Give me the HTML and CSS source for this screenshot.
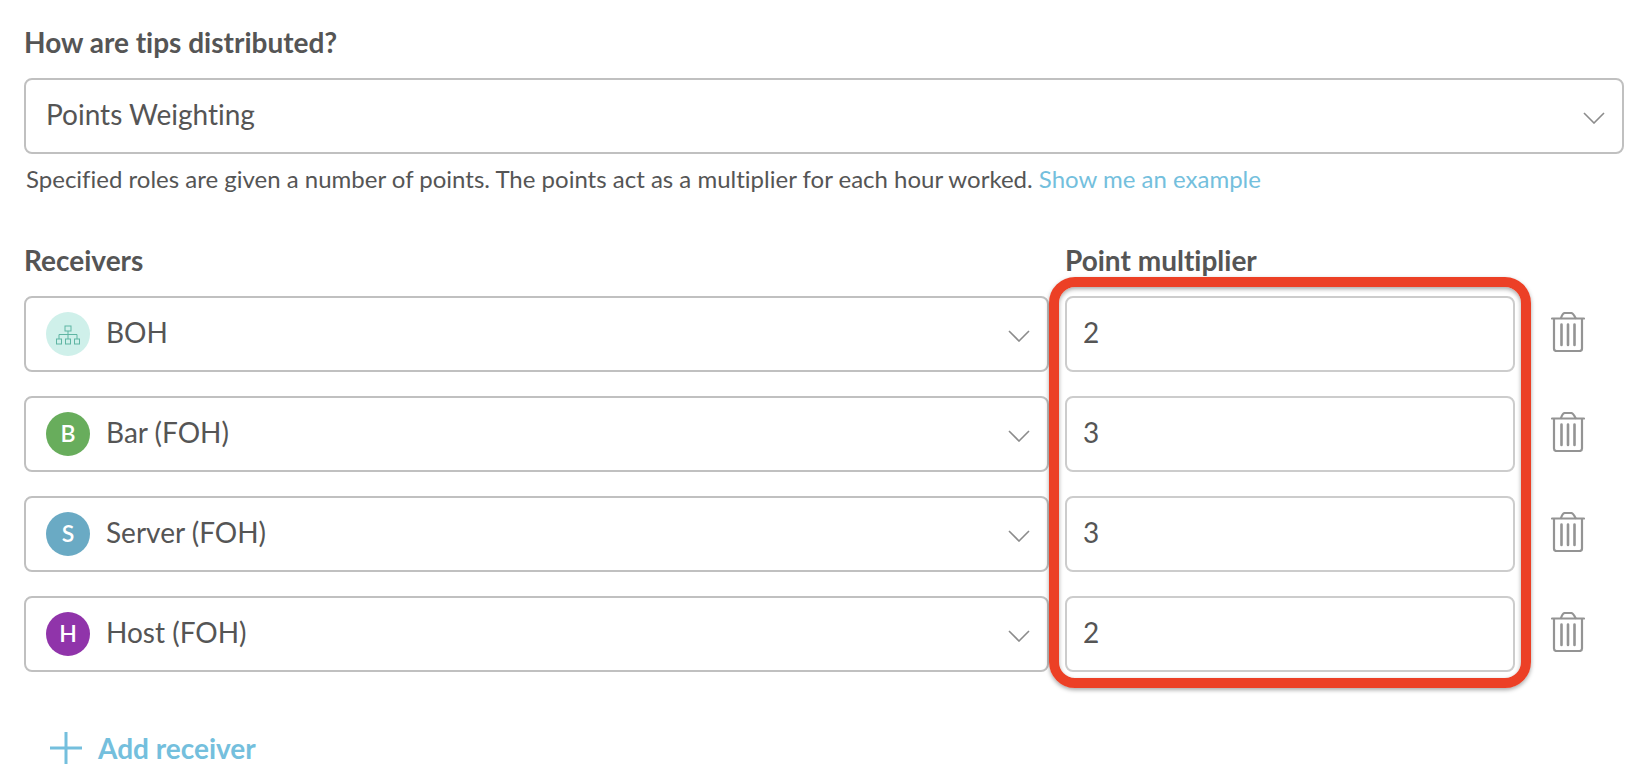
FILE: index.html
```
<!DOCTYPE html>
<html lang="en">
<head>
    <meta charset="utf-8">
    <meta name="viewport" content="width=device-width, initial-scale=1">
    <link rel="stylesheet" href="styles.css">
    <title>Tip Distribution</title>
</head>
<body>
    <!-- Shared icons -->
    <svg class="icon-defs" aria-hidden="true">
        <symbol id="chevron" viewBox="0 0 22 12">
            <path d="M1 1 L11 11 L21 1" fill="none" stroke="#8c8c8c" stroke-width="1.6"/>
        </symbol>
        <symbol id="trash" viewBox="0 0 34 40">
            <g fill="none" stroke="#949494" stroke-width="2.2" stroke-linecap="round">
                <path d="M1 6.500 H33"/>
                <path d="M10 6 C11 3 12 1 14 1 H20 C22 1 23 3 24.500 6"/>
                <path d="M3 7 V36.500 Q3 39 5.500 39 H28.500 Q31 39 31 36.500 V7"/>
                <path d="M10.500 12.500 V33 M17 12.500 V33 M23.500 12.500 V33" stroke-width="2.600"/>
            </g>
        </symbol>
    </svg>

    <form class="tip-form">
        <label class="field-label" for="distribution">How are tips distributed?</label>
        <div class="select-box">
            <select id="distribution" class="control">
                <option>Points Weighting</option>
            </select>
            <svg class="chevron"><use href="#chevron"/></svg>
        </div>
        <p class="help-text">Specified roles are given a number of points. The points act as a multiplier for each hour worked. <a href="#">Show me an example</a></p>

        <div class="receivers">
            <span class="field-label" id="receiversLabel">Receivers</span>
            <span class="field-label multiplier-label" id="multiplierLabel">Point multiplier</span>

            <div class="select-box">
                <select class="control with-avatar" aria-labelledby="receiversLabel">
                    <option>BOH</option>
                </select>
                <span class="avatar avatar-boh">
                    <svg width="24" height="20" viewBox="0 0 24 20" fill="none" stroke="#5fb5a3">
                        <rect x="9" y="1" width="6" height="5"/>
                        <rect x="0.5" y="14" width="5" height="5"/>
                        <rect x="9.5" y="14" width="5" height="5"/>
                        <rect x="18.5" y="14" width="5" height="5"/>
                        <path d="M12 6 V14 M3 14 V9.500 H21 V14"/>
                    </svg>
                </span>
                <svg class="chevron"><use href="#chevron"/></svg>
            </div>
            <input class="control multiplier" type="text" value="2" aria-labelledby="multiplierLabel">
            <button class="delete-button" type="button" aria-label="Delete BOH">
                <svg width="34" height="40"><use href="#trash"/></svg>
            </button>

            <div class="select-box">
                <select class="control with-avatar" aria-labelledby="receiversLabel">
                    <option>Bar (FOH)</option>
                </select>
                <span class="avatar avatar-bar">B</span>
                <svg class="chevron"><use href="#chevron"/></svg>
            </div>
            <input class="control multiplier" type="text" value="3" aria-labelledby="multiplierLabel">
            <button class="delete-button" type="button" aria-label="Delete Bar">
                <svg width="34" height="40"><use href="#trash"/></svg>
            </button>

            <div class="select-box">
                <select class="control with-avatar" aria-labelledby="receiversLabel">
                    <option>Server (FOH)</option>
                </select>
                <span class="avatar avatar-server">S</span>
                <svg class="chevron"><use href="#chevron"/></svg>
            </div>
            <input class="control multiplier" type="text" value="3" aria-labelledby="multiplierLabel">
            <button class="delete-button" type="button" aria-label="Delete Server">
                <svg width="34" height="40"><use href="#trash"/></svg>
            </button>

            <div class="select-box">
                <select class="control with-avatar" aria-labelledby="receiversLabel">
                    <option>Host (FOH)</option>
                </select>
                <span class="avatar avatar-host">H</span>
                <svg class="chevron"><use href="#chevron"/></svg>
            </div>
            <input class="control multiplier" type="text" value="2" aria-labelledby="multiplierLabel">
            <button class="delete-button" type="button" aria-label="Delete Host">
                <svg width="34" height="40"><use href="#trash"/></svg>
            </button>

            <div class="highlight"></div>
        </div>

        <button class="add-button" type="button">
            <svg width="32" height="32" viewBox="0 0 32 32" stroke="#74bfdd" stroke-width="3">
                <path d="M16 0 V32 M0 16 H32"/>
            </svg>
            Add receiver
        </button>
    </form>
</body>
</html>
```
FILE: styles.css
```
* {
    margin: 0;
    padding: 0;
    box-sizing: border-box;
}

body {
    font-family: Lato, "Liberation Sans", sans-serif;
    font-size: 28px;
    font-variant-ligatures: none;
    color: #555;
    background-color: #fff;
}

.icon-defs {
    display: none;
}

.tip-form {
    padding: 32px 20px 16px 24px;
}

/* Labels and help text */
.field-label {
    display: block;
    padding-bottom: 2px;
    font-weight: bold;
    line-height: 20px;
}

.help-text {
    margin: 10px 0 56px;
    padding-left: 2px;
    font-size: 24px;
    line-height: 30px;
}

.help-text a {
    color: #74bfdd;
    text-decoration: none;
}

/* Inputs and drop-downs */
.control {
    display: block;
    width: 100%;
    height: 76px;
    padding: 0 60px 4px 20px;
    border: 2px solid #c0c0c0;
    border-radius: 8px;
    background-color: #fff;
    color: #555;
    font: inherit;
    font-variant-ligatures: none;
    appearance: none;
}

.select-box {
    position: relative;
}

.tip-form > .select-box {
    margin-top: 24px;
}

.control.with-avatar {
    padding-left: 80px;
}

.control.multiplier {
    padding: 0 16px 4px;
    border-color: #ccc;
}

.chevron {
    position: absolute;
    top: 34px;
    right: 19px;
    width: 22px;
    height: 12px;
    pointer-events: none;
}

/* Round badge inside a receiver drop-down */
.avatar {
    position: absolute;
    top: 16px;
    left: 22px;
    display: flex;
    align-items: center;
    justify-content: center;
    width: 44px;
    height: 44px;
    padding-bottom: 2px;
    border-radius: 50%;
    color: #fff;
    font-size: 23px;
    font-weight: 600;
    pointer-events: none;
}

.avatar-boh {
    padding: 2px 0 0;
    background-color: #cff0ea;
}

.avatar-bar {
    background-color: #68ad5c;
}

.avatar-server {
    background-color: #6aaac4;
}

.avatar-host {
    background-color: #9034aa;
}

/* Receivers list */
.receivers {
    position: relative;
    display: grid;
    grid-template-columns: minmax(0, 1025fr) minmax(0, 450fr) 93px;
    grid-template-rows: auto repeat(4, auto);
    gap: 24px 16px;
}

.multiplier-label {
    grid-column: 2 / 4;
}

.delete-button {
    display: flex;
    align-items: center;
    padding: 0 20px 4px;
    border: none;
    background: none;
    cursor: pointer;
}

/* Frame around the multiplier column */
.highlight {
    position: absolute;
    grid-column: 2 / 3;
    grid-row: 2 / 6;
    inset: -19px -16px -16px;
    border: 10px solid #ec4026;
    border-radius: 26px;
    box-shadow: 0 2px 4px rgba(0, 0, 0, 0.35), inset 0 2px 4px rgba(0, 0, 0, 0.35);
    pointer-events: none;
}

.add-button {
    display: flex;
    align-items: center;
    gap: 16px;
    margin: 59px 0 0 26px;
    border: none;
    background: none;
    color: #74bfdd;
    font: inherit;
    font-weight: bold;
    cursor: pointer;
}
```
